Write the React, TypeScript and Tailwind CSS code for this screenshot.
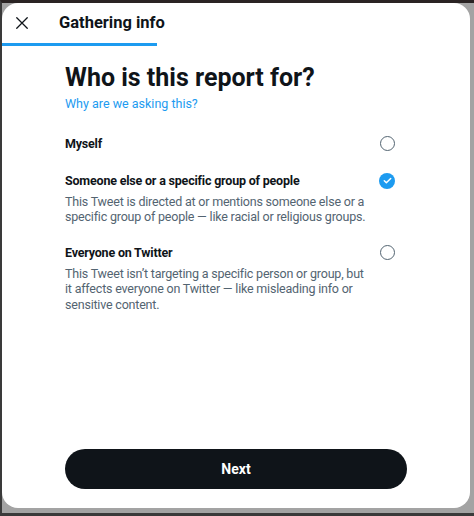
import React from "react";

function Radio({ checked }: { checked?: boolean }) {
  if (checked) {
    return (
      <div className="w-[16px] h-[16px] rounded-full bg-[#1d9bf0] flex items-center justify-center shrink-0">
        <svg width="11" height="11" viewBox="0 0 24 24" fill="none">
          <path d="M5 12.5l4.5 4.5L19 7.5" stroke="white" strokeWidth="3.2" strokeLinecap="round" strokeLinejoin="round" />
        </svg>
      </div>
    );
  }
  return <div className="w-[15px] h-[15px] rounded-full border-[1.5px] border-[#536471] shrink-0" />;
}

function Option({ label, lines, checked }: { label: string; lines?: string[]; checked?: boolean }) {
  return (
    <div className="flex items-start justify-between">
      <div className="w-[310px]">
        <div className="text-[12.5px] tracking-[-0.2px] font-bold leading-[18px] text-[#0f1419]">{label}</div>
        {lines && (
          <div className="text-[12.5px] tracking-[-0.2px] leading-[15.5px] text-[#536471] mt-[4px]">
            {lines.map((l, i) => (
              <div key={i} className="whitespace-nowrap">{l}</div>
            ))}
          </div>
        )}
      </div>
      <div className="mr-[12px] mt-[1px]">
        <Radio checked={checked} />
      </div>
    </div>
  );
}

export default function App() {
  return (
    <div
      className="w-[474px] h-[516px] bg-[#a3a3a3] border-t-[3px] border-t-[#2a2323] border-l-[2px] border-l-[#3a3a3a] border-b-[3px] border-b-[#3a3a3a] overflow-hidden"
      style={{ fontFamily: "Roboto, 'Noto Sans', sans-serif" }}
    >
      <div className="w-[468px] h-[505px] bg-white rounded-[16px] flex flex-col">
        <div className="h-[40px] flex items-center">
          <div className="w-[40px] flex justify-center">
            <svg width="14" height="14" viewBox="0 0 24 24" fill="none">
              <path d="M3 3L21 21M21 3L3 21" stroke="#0f1419" strokeWidth="2.2" strokeLinecap="round" />
            </svg>
          </div>
          <div className="ml-[17px] text-[16.5px] font-bold text-[#0f1419]">Gathering info</div>
        </div>
        <div className="w-[155px] h-[2.5px] bg-[#1d9bf0]" />
        <div className="px-[63px] pt-[17px] flex flex-col">
          <div className="text-[25px] font-bold leading-[30px] text-[#0f1419]">Who is this report for?</div>
          <div className="text-[12.5px] leading-[16px] text-[#1d9bf0] mt-[3px]">Why are we asking this?</div>
          <div className="mt-[23px] flex flex-col gap-[19px]">
            <Option label="Myself" />
            <Option
              label="Someone else or a specific group of people"
              lines={[
                "This Tweet is directed at or mentions someone else or a",
                "specific group of people — like racial or religious groups.",
              ]}
              checked
            />
            <Option
              label="Everyone on Twitter"
              lines={[
                "This Tweet isn’t targeting a specific person or group, but",
                "it affects everyone on Twitter — like misleading info or",
                "sensitive content.",
              ]}
            />
          </div>
        </div>
        <div className="mt-auto px-[63px] pb-[19px]">
          <div className="h-[40px] rounded-full bg-[#0f1419] flex items-center justify-center text-white text-[14px] font-bold">
            Next
          </div>
        </div>
      </div>
    </div>
  );
}
